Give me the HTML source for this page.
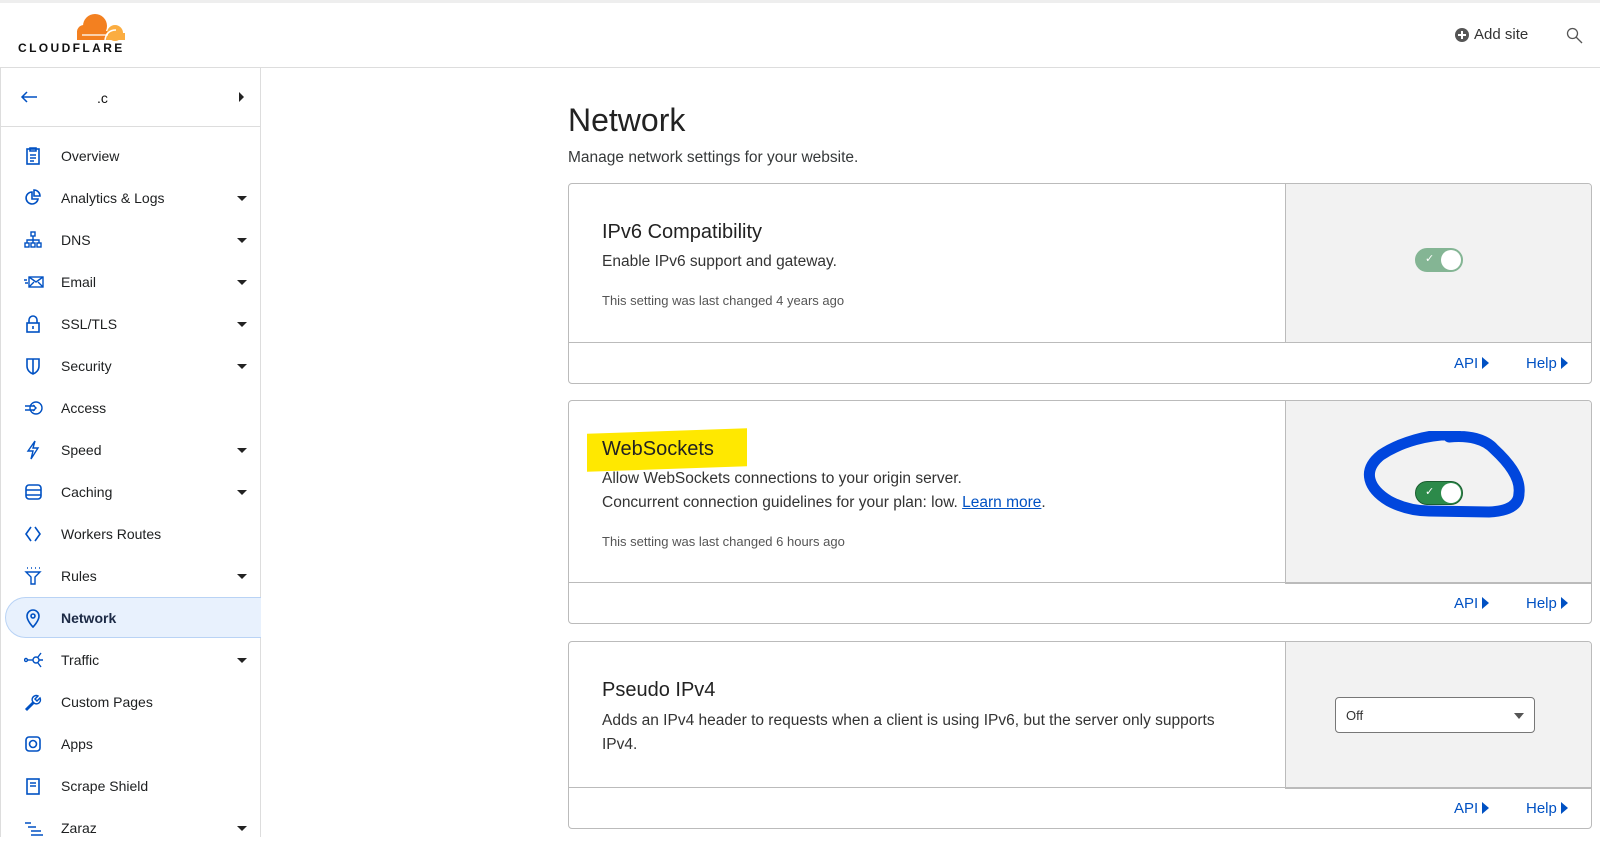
<!DOCTYPE html>
<html><head><meta charset="utf-8"><style>
*{margin:0;padding:0;box-sizing:border-box}
body{width:1600px;height:837px;overflow:hidden;background:#fff;font-family:"Liberation Sans",sans-serif;color:#222;position:relative}
.a{position:absolute;line-height:1;white-space:nowrap}
.nav{position:absolute;left:0;width:261px;height:42px}
.nav .t{position:absolute;left:61px;top:13px;font-size:14px;color:#1d1f20}
.nav svg{position:absolute;left:24px;top:11px}
.nav .c{position:absolute;left:237px;top:19px;width:0;height:0;border-left:5px solid transparent;border-right:5px solid transparent;border-top:5px solid #222}
.card{position:absolute;left:568px;width:1024px;border:1px solid #bbb;border-radius:4px;overflow:hidden}
.gray{position:absolute;left:716px;right:0;top:0;background:#f2f2f2;border-left:1px solid #bbb;border-bottom:1px solid #bbb}
.foot{position:absolute;left:0;right:0;bottom:0;border-top:1px solid #bbb}
.lnk{position:absolute;font-size:15px;color:#0051c3}
.tri{display:inline-block;width:0;height:0;border-top:6px solid transparent;border-bottom:6px solid transparent;border-left:7px solid #0051c3;margin-left:4px;vertical-align:-1px}
.tog{position:absolute;width:48px;height:24px;border-radius:12px;border:1px solid #1b5e30}
.tog .k{position:absolute;right:1px;top:1px;width:20px;height:20px;border-radius:50%;background:#fff}
</style></head><body>
<div style="position:absolute;left:0;top:0;width:1600px;height:3px;background:#eee"></div>
<div style="position:absolute;left:0;top:67px;width:1600px;height:1px;background:#ddd"></div>
<svg style="position:absolute;left:72px;top:13px" width="54" height="28" viewBox="0 0 54 28"><circle cx="23" cy="13" r="12" fill="#f38020"/><circle cx="12" cy="19" r="7" fill="#f38020"/><rect x="5" y="18" width="32" height="9" fill="#f38020"/><circle cx="43" cy="20" r="8" fill="#fbad41"/><rect x="34" y="20" width="19" height="7" fill="#fbad41"/><path d="M33 27 C34 20 38 17 44 17" stroke="#fff" stroke-width="1.5" fill="none"/><path d="M10 22 L36 22" stroke="#fff" stroke-width="1.2"/></svg>
<div class="a" style="left:18px;top:42px;font-size:12px;font-weight:bold;letter-spacing:2.4px;color:#111">CLOUDFLARE</div>
<svg style="position:absolute;left:1455px;top:28px" width="14" height="14"><circle cx="7" cy="7" r="7" fill="#555"/><path d="M7 3v8M3 7h8" stroke="#fff" stroke-width="2"/></svg>
<div class="a" style="left:1474px;top:27px;font-size:15px;color:#333">Add site</div>
<svg style="position:absolute;left:1566px;top:27px" width="17" height="17" fill="none" stroke="#555" stroke-width="1.3"><circle cx="6.5" cy="6.5" r="5"/><path d="M10 10l6 6"/></svg>
<div style="position:absolute;left:260px;top:68px;width:1px;height:769px;background:#ddd"></div>
<div style="position:absolute;left:0;top:68px;width:1px;height:769px;background:#ddd"></div>
<div style="position:absolute;left:0;top:126px;width:260px;height:1px;background:#ddd"></div>
<svg style="position:absolute;left:20px;top:90px" width="18" height="14" fill="none" stroke="#0051c3" stroke-width="1.5"><path d="M17 7H2M7 2L2 7l5 5"/></svg>
<div class="a" style="left:97px;top:91px;font-size:14px;color:#111">.c</div>
<div style="position:absolute;left:239px;top:92px;border-top:5px solid transparent;border-bottom:5px solid transparent;border-left:5px solid #222"></div>

<div style="position:absolute;left:5px;top:597px;width:256px;height:41px;background:#e8f1fd;border:1px solid #b9d3f5;border-right:none;border-radius:21px 0 0 21px"></div>

<div class="nav" style="top:135px"><svg width="18" height="20" fill="none" stroke="#0051c3" stroke-width="1.6"><rect x="3" y="3" width="12" height="15"/><path d="M6 2h6v3H6zM6 9h6M6 12h6M6 15h4"/></svg><span class="t">Overview</span></div>
<div class="nav" style="top:177px"><svg width="18" height="20" fill="none" stroke="#0051c3" stroke-width="1.6"><path d="M8 4a6 6 0 1 0 6 7H8z"/><path d="M10 2a6 6 0 0 1 6 6h-6z"/></svg><span class="t">Analytics &amp; Logs</span><i class="c"></i></div>
<div class="nav" style="top:219px"><svg width="18" height="20" fill="none" stroke="#0051c3" stroke-width="1.4"><rect x="7" y="2" width="4" height="4"/><rect x="1" y="13" width="4" height="4"/><rect x="7" y="13" width="4" height="4"/><rect x="13" y="13" width="4" height="4"/><path d="M9 6v7M3 13v-3h12v3"/></svg><span class="t">DNS</span><i class="c"></i></div>
<div class="nav" style="top:261px"><svg width="20" height="20" fill="none" stroke="#0051c3" stroke-width="1.4"><rect x="5" y="5" width="14" height="10"/><path d="M5 5l7 5 7-5M5 15l5-5M19 15l-5-5M0 8h3M1 11h3"/></svg><span class="t">Email</span><i class="c"></i></div>
<div class="nav" style="top:303px"><svg width="18" height="20" fill="none" stroke="#0051c3" stroke-width="1.6"><rect x="3" y="9" width="12" height="9"/><path d="M5 9V6a4 4 0 0 1 8 0v3M9 12v3"/></svg><span class="t">SSL/TLS</span><i class="c"></i></div>
<div class="nav" style="top:345px"><svg width="18" height="20" fill="none" stroke="#0051c3" stroke-width="1.6"><path d="M3 3h12v7c0 4-3 7-6 8-3-1-6-4-6-8z M9 3v15"/></svg><span class="t">Security</span><i class="c"></i></div>
<div class="nav" style="top:387px"><svg width="20" height="20" fill="none" stroke="#0051c3" stroke-width="1.4"><circle cx="12" cy="10" r="6"/><path d="M1 8h10M1 12h10M9 7l3 3-3 3"/></svg><span class="t">Access</span></div>
<div class="nav" style="top:429px"><svg width="18" height="20" fill="none" stroke="#0051c3" stroke-width="1.4"><path d="M11 1L4 11h5l-2 8 7-11H9z"/></svg><span class="t">Speed</span><i class="c"></i></div>
<div class="nav" style="top:471px"><svg width="18" height="20" fill="none" stroke="#0051c3" stroke-width="1.6"><rect x="2" y="3" width="15" height="14" rx="3"/><path d="M2 8h15M2 13h15"/></svg><span class="t">Caching</span><i class="c"></i></div>
<div class="nav" style="top:513px"><svg width="18" height="20" fill="none" stroke="#0051c3" stroke-width="1.6"><path d="M7 3L2 10l5 7M11 3l5 7-5 7"/></svg><span class="t">Workers Routes</span></div>
<div class="nav" style="top:555px"><svg width="18" height="20" fill="none" stroke="#0051c3" stroke-width="1.4"><path d="M2 6h14l-5 5v7h-4v-7z M3 2h1M7 2h1M11 2h1M15 2h1"/></svg><span class="t">Rules</span><i class="c"></i></div>
<div class="nav" style="top:597px"><svg width="18" height="20" fill="none" stroke="#0051c3" stroke-width="1.6"><path d="M9 19s-6-6-6-11a6 6 0 0 1 12 0c0 5-6 11-6 11z"/><circle cx="9" cy="8" r="2"/></svg><span class="t" style="font-weight:bold;color:#1c2a45">Network</span></div>
<div class="nav" style="top:639px"><svg width="20" height="20" fill="none" stroke="#0051c3" stroke-width="1.4"><circle cx="2" cy="10" r="1.5"/><path d="M4 10h5"/><circle cx="12" cy="10" r="3"/><path d="M14 7l3-4M15 10h4M14 13l3 4"/></svg><span class="t">Traffic</span><i class="c"></i></div>
<div class="nav" style="top:681px"><svg width="18" height="20" fill="none" stroke="#0051c3" stroke-width="1.5"><path d="M2 17l7-7a4 4 0 0 1 5-6l-3 3 2 2 3-3a4 4 0 0 1-6 5l-7 7z"/></svg><span class="t">Custom Pages</span></div>
<div class="nav" style="top:723px"><svg width="18" height="20" fill="none" stroke="#0051c3" stroke-width="1.6"><rect x="2" y="3" width="14" height="14" rx="3"/><circle cx="9" cy="10" r="3.5"/></svg><span class="t">Apps</span></div>
<div class="nav" style="top:765px"><svg width="18" height="20" fill="none" stroke="#0051c3" stroke-width="1.6"><rect x="3" y="3" width="12" height="15"/><path d="M6 7h6M6 10h6"/></svg><span class="t">Scrape Shield</span></div>
<div class="nav" style="top:807px"><svg width="20" height="20" fill="none" stroke="#0051c3" stroke-width="1.6"><path d="M1 5h6M4 9h8M7 13h10M7 17h12"/></svg><span class="t">Zaraz</span><i class="c"></i></div>

<div class="a" style="left:568px;top:104px;font-size:32px;color:#222">Network</div>
<div class="a" style="left:568px;top:150px;font-size:15.5px;color:#36393a">Manage network settings for your website.</div>

<div class="card" style="top:183px;height:201px">
 <div class="gray" style="height:159px"></div>
 <div class="a" style="left:33px;top:38px;font-size:20px">IPv6 Compatibility</div>
 <div class="a" style="left:33px;top:70px;font-size:15.5px;color:#333">Enable IPv6 support and gateway.</div>
 <div class="a" style="left:33px;top:110px;font-size:13px;color:#555">This setting was last changed 4 years ago</div>
 <div class="tog" style="left:846px;top:64px;background:#84b594;border-color:#84b594"><span class="a" style="left:9px;top:5px;font-size:11px;color:#fff">✓</span><i class="k"></i></div>
 <div class="foot" style="height:41px"><span class="lnk" style="left:885px;top:12px">API<i class="tri"></i></span><span class="lnk" style="left:957px;top:12px">Help<i class="tri"></i></span></div>
</div>

<div class="card" style="top:400px;height:224px">
 <div class="gray" style="height:183px"></div>
 <div style="position:absolute;left:18px;top:30px;width:160px;height:38px;background:#ffe800;transform:skewY(-2deg)"></div>
 <div class="a" style="left:33px;top:38px;font-size:20px">WebSockets</div>
 <div class="a" style="left:33px;top:70px;font-size:15.5px;color:#333">Allow WebSockets connections to your origin server.</div>
 <div class="a" style="left:33px;top:94px;font-size:15.5px;color:#333">Concurrent connection guidelines for your plan: low. <span style="color:#0051c3;text-decoration:underline">Learn more</span>.</div>
 <div class="a" style="left:33px;top:134px;font-size:13px;color:#555">This setting was last changed 6 hours ago</div>
 <div class="tog" style="left:846px;top:80px;background:#2c8a4a"><span class="a" style="left:9px;top:5px;font-size:11px;color:#fff">✓</span><i class="k"></i></div>
 <svg style="position:absolute;left:790px;top:30px" width="170" height="100" fill="none"><path d="M98 4 C70 2 40 12 22 24 C2 40 10 58 30 70 C45 78 60 80 70 80 L130 81 C150 80 160 74 160 62 C162 46 148 30 135 18 C126 8 110 4 90 6" stroke="#0046dd" stroke-width="11" stroke-linecap="round"/></svg>
 <div class="foot" style="height:41px"><span class="lnk" style="left:885px;top:12px">API<i class="tri"></i></span><span class="lnk" style="left:957px;top:12px">Help<i class="tri"></i></span></div>
</div>

<div class="card" style="top:641px;height:188px">
 <div class="gray" style="height:147px"></div>
 <div class="a" style="left:33px;top:38px;font-size:20px">Pseudo IPv4</div>
 <div class="a" style="left:33px;top:71px;font-size:15.5px;color:#333">Adds an IPv4 header to requests when a client is using IPv6, but the server only supports</div>
 <div class="a" style="left:33px;top:95px;font-size:15.5px;color:#333">IPv4.</div>
 <div style="position:absolute;left:766px;top:55px;width:200px;height:36px;background:#fff;border:1px solid #777;border-radius:4px"><span class="a" style="left:10px;top:11px;font-size:13px;color:#333">Off</span><i style="position:absolute;right:10px;top:15px;border-left:5px solid transparent;border-right:5px solid transparent;border-top:6px solid #555"></i></div>
 <div class="foot" style="height:41px"><span class="lnk" style="left:885px;top:12px">API<i class="tri"></i></span><span class="lnk" style="left:957px;top:12px">Help<i class="tri"></i></span></div>
</div>
</body></html>
